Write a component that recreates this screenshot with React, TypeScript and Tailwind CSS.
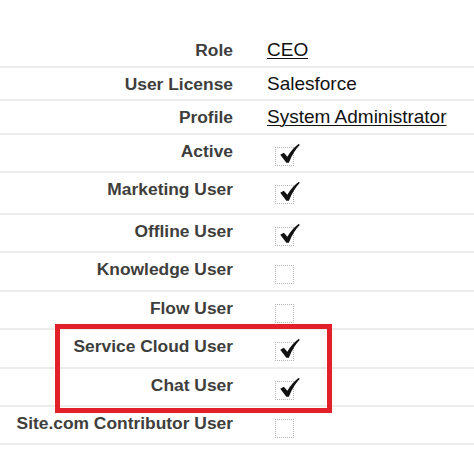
type Row = {
  label: string;
  height: number;
  value?: string;
  link?: boolean;
  checked?: boolean;
};

const rows: Row[] = [
  { label: "Role", height: 34, value: "CEO", link: true },
  { label: "User License", height: 33, value: "Salesforce" },
  { label: "Profile", height: 34, value: "System Administrator", link: true },
  { label: "Active", height: 38, checked: true },
  { label: "Marketing User", height: 42, checked: true },
  { label: "Offline User", height: 38, checked: true },
  { label: "Knowledge User", height: 39, checked: false },
  { label: "Flow User", height: 38, checked: false },
  { label: "Service Cloud User", height: 39, checked: true },
  { label: "Chat User", height: 38, checked: true },
  { label: "Site.com Contributor User", height: 38, checked: false },
];

function CheckBox({ checked }: { checked: boolean }) {
  return (
    <div className="relative ml-[8px] mt-[7px] h-[19px] w-[19px] border border-dotted border-[#b5b5b5]">
      {checked && (
        <svg
          className="absolute left-[3px] top-[-5px] h-[21px] w-[21px]"
          viewBox="0 0 20 20"
          aria-hidden="true"
        >
          <path
            d="M1.2 11.2 L4.6 9.2 L8 13.2 Q12.3 5.4 19 0.8 L19.7 2 Q13.8 7.8 9.4 18.8 L7 18.8 Z"
            fill="#111"
          />
        </svg>
      )}
    </div>
  );
}

export default function App() {
  return (
    <main
      className="relative w-[474px] bg-white pt-[34px]"
      style={{ fontFamily: '"Liberation Sans", Arial, sans-serif' }}
    >
      {rows.map((r) => (
        <div
          key={r.label}
          className="flex border-b-2 border-[#ececec] pt-[5px]"
          style={{ height: r.height }}
        >
          <div className="w-[233px] shrink-0 text-right text-[17.4px] font-bold leading-[22px] text-[#3e3e3c]">
            {r.label}
          </div>
          <div className="ml-[34px]">
            {r.value !== undefined ? (
              <span
                className={`text-[19px] leading-[22px] text-[#111] ${
                  r.link ? "underline decoration-1 underline-offset-2" : ""
                }`}
              >
                {r.value}
              </span>
            ) : (
              <CheckBox checked={!!r.checked} />
            )}
          </div>
        </div>
      ))}

      {/* highlight annotation */}
      <div className="pointer-events-none absolute left-[55px] top-[324px] h-[89px] w-[277px] border-[5px] border-[#e2202a]" />
    </main>
  );
}
